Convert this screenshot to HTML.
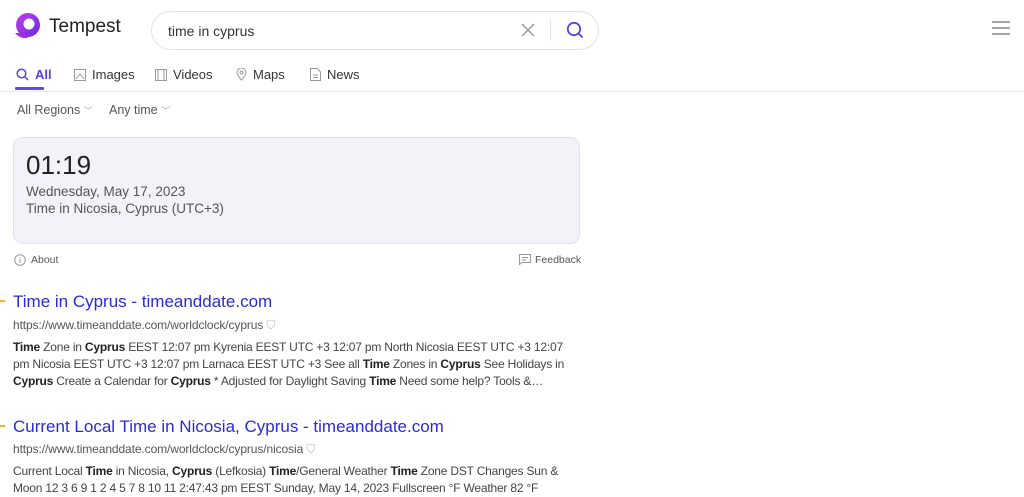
<!DOCTYPE html><html><head><style>
body{margin:0;width:1024px;height:497px;overflow:hidden;background:#fff;font-family:"Liberation Sans",Arial,sans-serif;color:#333;position:relative}
.a{position:absolute;white-space:nowrap}
.tab{position:absolute;top:67px;font-size:13px;color:#333;display:flex;align-items:center;gap:6px}
.t{font-size:17px;color:#2a2ad8}
.u{font-size:12px;color:#555;letter-spacing:-0.1px}
.s{font-size:12px;color:#444;line-height:17px;width:566px;white-space:normal;letter-spacing:-0.2px}
b{color:#222}
</style></head><body>
<svg class="a" style="left:12px;top:11px" width="30" height="30" viewBox="0 0 30 30"><defs><linearGradient id="g" x1="0" y1="0" x2="1" y2="1"><stop offset="0" stop-color="#c13df0"/><stop offset="1" stop-color="#6a2bd8"/></linearGradient></defs><circle cx="16" cy="14" r="12" fill="url(#g)"/><circle cx="17" cy="13" r="5.5" fill="#fff"/><path d="M3 22 Q8 28 16 27 L12 22Z" fill="#a62ce0"/></svg>
<div class="a" style="left:49px;top:16px;font-size:19px;color:#222">Tempest</div>
<div class="a" style="left:151px;top:11px;width:446px;height:37px;border:1px solid #e2e2e8;border-radius:20px"></div>
<div class="a" style="left:168px;top:23px;font-size:14px;color:#333">time in cyprus</div>
<svg class="a" style="left:521px;top:23px" width="14" height="14"><path d="M1 1L13 13M13 1L1 13" stroke="#999" stroke-width="1.5"/></svg>
<div class="a" style="left:550px;top:19px;width:1px;height:22px;background:#e5e5e5"></div>
<svg class="a" style="left:566px;top:21px" width="18" height="18"><circle cx="8" cy="8" r="6.2" fill="none" stroke="#5b43d6" stroke-width="1.8"/><path d="M12.5 12.5L16.5 16.5" stroke="#5b43d6" stroke-width="1.8"/></svg>
<svg class="a" style="left:992px;top:21px" width="18" height="14"><path d="M0 1H18M0 7H18M0 13H18" stroke="#888" stroke-width="1.5"/></svg>
<div class="tab" style="left:16px;color:#5b43d6;font-weight:bold"><svg width="13" height="13"><circle cx="5.5" cy="5.5" r="4.3" fill="none" stroke="#5b43d6" stroke-width="1.5"/><path d="M8.5 8.5L12 12" stroke="#5b43d6" stroke-width="1.5"/></svg>All</div>
<div class="a" style="left:15px;top:87px;width:29px;height:3px;background:#5b4ee0;border-radius:1px"></div>
<div class="tab" style="left:74px"><svg width="12" height="12"><rect x=".5" y=".5" width="11" height="11" fill="none" stroke="#999"/><path d="M2 10L6 5L10 10" fill="none" stroke="#999"/></svg>Images</div>
<div class="tab" style="left:155px"><svg width="12" height="12"><rect x=".5" y=".5" width="11" height="11" fill="none" stroke="#999"/><path d="M3 0V12M9 0V12" stroke="#999"/></svg>Videos</div>
<div class="tab" style="left:236px"><svg width="11" height="13"><path d="M5.5 12C2 8 1 6 1 4.5a4.5 4.5 0 019 0C10 6 9 8 5.5 12Z" fill="none" stroke="#999"/><circle cx="5.5" cy="4.5" r="1.5" fill="none" stroke="#999"/></svg>Maps</div>
<div class="tab" style="left:310px"><svg width="11" height="13"><path d="M.5 .5H7L10.5 4V12.5H.5Z" fill="none" stroke="#999"/><path d="M3 7H8M3 9.5H8" stroke="#999"/></svg>News</div>
<div class="a" style="left:0;top:91px;width:1024px;height:1px;background:#e8e8ec"></div>
<div class="a" style="left:17px;top:103px;font-size:12.5px;color:#555">All Regions <span style="color:#aaa;font-size:9px">﹀</span></div>
<div class="a" style="left:109px;top:103px;font-size:12.5px;color:#555">Any time <span style="color:#aaa;font-size:9px">﹀</span></div>
<div class="a" style="left:13px;top:137px;width:565px;height:105px;background:#f2f2f8;border:1px solid #e6def2;border-radius:10px"></div>
<div class="a" style="left:26px;top:150px;font-size:26px;color:#222">01:19</div>
<div class="a" style="left:26px;top:183px;font-size:13.5px;color:#555;line-height:17px">Wednesday, May 17, 2023<br>Time in Nicosia, Cyprus (UTC+3)</div>
<svg class="a" style="left:14px;top:254px" width="12" height="12"><circle cx="6" cy="6" r="5.3" fill="none" stroke="#999"/><path d="M6 5V9M6 3V4" stroke="#999"/></svg>
<div class="a" style="left:31px;top:254px;font-size:10.5px;color:#555">About</div>
<svg class="a" style="left:519px;top:254px" width="12" height="11"><path d="M.5 .5H11.5V8.5H3L.5 10.5Z" fill="none" stroke="#999"/><path d="M3 3.5H9M3 6H7" stroke="#999"/></svg>
<div class="a" style="left:535px;top:254px;font-size:10.5px;color:#555">Feedback</div>
<div class="a t" style="left:13px;top:292px">Time in Cyprus - timeanddate.com</div>
<div class="a u" style="left:13px;top:318px">https://www.timeanddate.com/worldclock/cyprus <span style="color:#bbb">⛉</span></div>
<div class="a s" style="left:13px;top:339px"><b>Time</b> Zone in <b>Cyprus</b> EEST 12:07 pm Kyrenia EEST UTC +3 12:07 pm North Nicosia EEST UTC +3 12:07 pm Nicosia EEST UTC +3 12:07 pm Larnaca EEST UTC +3 See all <b>Time</b> Zones in <b>Cyprus</b> See Holidays in <b>Cyprus</b> Create a Calendar for <b>Cyprus</b> * Adjusted for Daylight Saving <b>Time</b> Need some help? Tools &amp;…</div>
<div class="a t" style="left:13px;top:417px">Current Local Time in Nicosia, Cyprus - timeanddate.com</div>
<div class="a u" style="left:13px;top:442px">https://www.timeanddate.com/worldclock/cyprus/nicosia <span style="color:#bbb">⛉</span></div>
<div class="a s" style="left:13px;top:463px">Current Local <b>Time</b> in Nicosia, <b>Cyprus</b> (Lefkosia) <b>Time</b>/General Weather <b>Time</b> Zone DST Changes Sun &amp; Moon 12 3 6 9 1 2 4 5 7 8 10 11 2:47:43 pm EEST Sunday, May 14, 2023 Fullscreen °F Weather 82 °F</div>
<div class="a" style="left:0;top:300px;width:5px;height:2px;background:#f0b040"></div>
<div class="a" style="left:0;top:425px;width:5px;height:2px;background:#f0b040"></div>
</body></html>
